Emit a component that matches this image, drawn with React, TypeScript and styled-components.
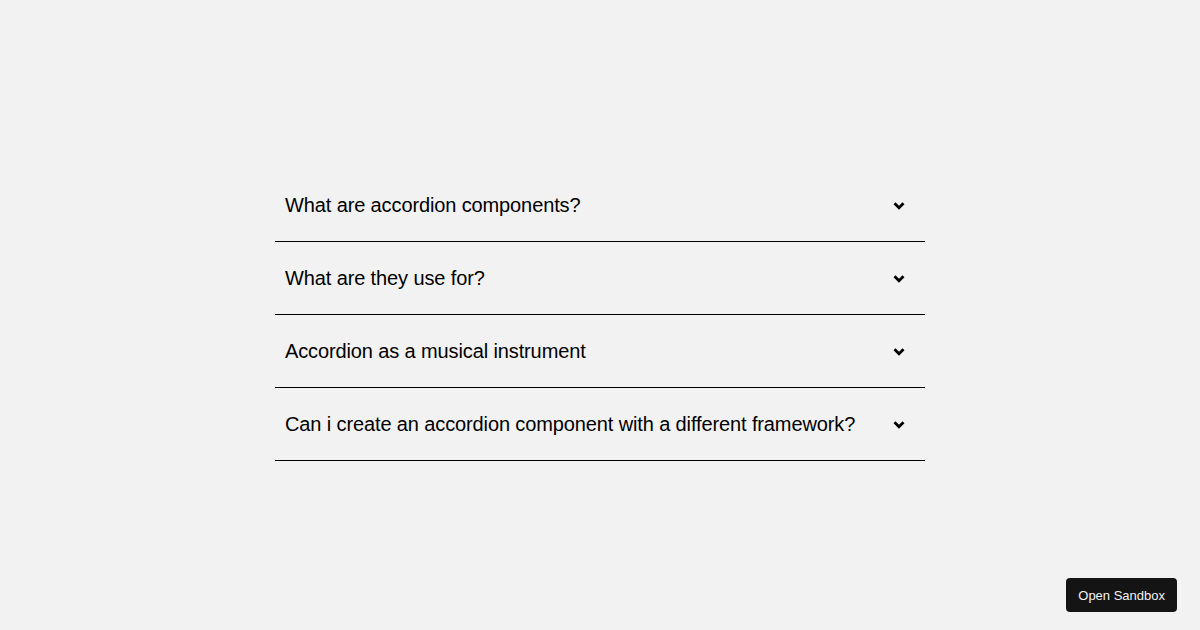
import React from "react";
import styled, { createGlobalStyle } from "styled-components";

const Global = createGlobalStyle`
  html, body { margin: 0; padding: 0; background: #f2f2f2; }
  body { font-family: "Liberation Sans", Arial, sans-serif; color: #000; }
`;

const Page = styled.main`
  width: 1200px;
  height: 630px;
  display: flex;
  align-items: center;
  justify-content: center;
  position: relative;
`;

const List = styled.div`
  width: 650px;
  display: flex;
  flex-direction: column;
`;

const Item = styled.div`
  border-bottom: 1px solid #000;
`;

const Trigger = styled.button`
  width: 100%;
  height: 72px;
  display: flex;
  align-items: center;
  justify-content: space-between;
  padding: 0 20px 0 10px;
  background: none;
  border: none;
  font-family: "Liberation Sans", Arial, sans-serif;
  font-size: 20px;
  letter-spacing: -0.12px;
  color: #000;
  cursor: pointer;
  text-align: left;
`;

const Chevron = styled.svg`
  width: 12px;
  height: 9px;
  flex: none;
`;

const SandboxButton = styled.button`
  position: absolute;
  right: 23px;
  bottom: 18px;
  height: 34px;
  padding: 0 12px;
  background: #141414;
  color: #f2f2f2;
  border: none;
  border-radius: 4px;
  font-family: "Liberation Sans", Arial, sans-serif;
  font-size: 13px;
`;

const items = [
  "What are accordion components?",
  "What are they use for?",
  "Accordion as a musical instrument",
  "Can i create an accordion component with a different framework?",
];

export default function App() {
  return (
    <>
      <Global />
      <Page>
        <List>
          {items.map((t) => (
            <Item key={t}>
              <Trigger>
                <span>{t}</span>
                <Chevron viewBox="0 0 12 9">
                  <path d="M1.5 2.2 L6 6.7 L10.5 2.2" fill="none" stroke="#000" strokeWidth="2.8" strokeLinecap="butt" strokeLinejoin="miter" />
                </Chevron>
              </Trigger>
            </Item>
          ))}
        </List>
        <SandboxButton>Open Sandbox</SandboxButton>
      </Page>
    </>
  );
}
